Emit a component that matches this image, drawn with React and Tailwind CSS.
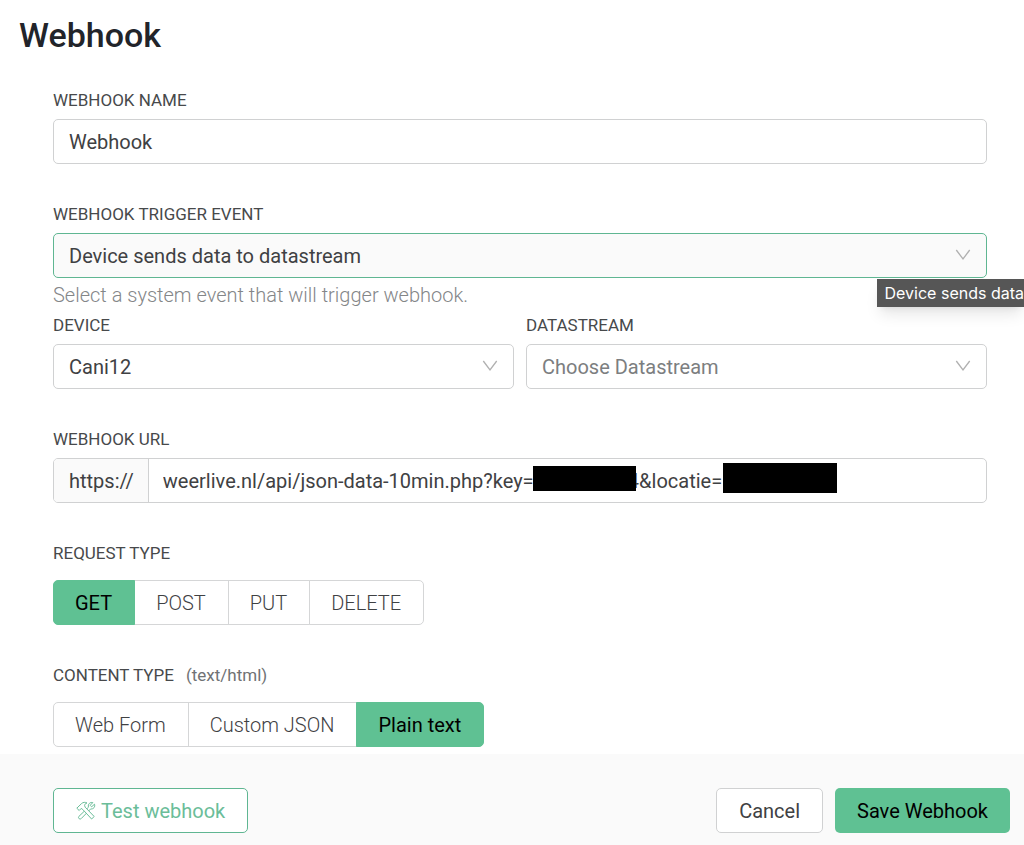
import React, { useState } from 'react';

const REQUEST_TYPES = ['GET', 'POST', 'PUT', 'DELETE'];
const CONTENT_TYPES = ['Web Form', 'Custom JSON', 'Plain text'];

// the key and the location are blanked out in the url
const BLANK_KEY = '\u00a0'.repeat(19) + '4';
const WEBHOOK_URL = `weerlive.nl/api/json-data-10min.php?key=${BLANK_KEY}&locatie=`;

const Label = ({ htmlFor, children }) => (
  <label htmlFor={htmlFor} className="block mb-[7px] text-[17px] leading-6 uppercase text-[#47494b]">
    {children}
  </label>
);

const Chevron = () => (
  <svg
    className="absolute right-4 top-4 w-4 h-3 pointer-events-none"
    viewBox="0 0 16 12"
    fill="none"
    stroke="#b0b0b0"
    strokeWidth="1.3"
  >
    <path d="M1.3 1 L8 10 L14.7 1" />
  </svg>
);

const Select = ({ id, value, active, placeholder }) => (
  <div className="relative">
    <select
      id={id}
      className={`block w-full h-[45px] pl-[15px] pr-10 appearance-none border rounded-[5px] outline-none ${
        active ? 'border-[#5fb692] bg-[#fafafa]' : 'border-[#d0d1d2] bg-white'
      } ${placeholder ? 'text-[#7c7e80]' : 'text-[#3f4143]'}`}
    >
      <option>{value}</option>
    </select>
    <Chevron />
  </div>
);

const RadioButtons = ({ name, legend, hint, options, value, onChange }) => (
  <fieldset>
    <legend className="mb-[15px] text-[17px] leading-6 text-[#47494b]">
      <span className="uppercase">{legend}</span>
      {hint && <span className="ml-3 text-[#707274]">{hint}</span>}
    </legend>
    <div className="flex">
      {options.map((option) => (
        <label
          key={option}
          className={`relative flex items-center h-[45px] pl-[21px] pr-[22px] -ml-px first:ml-0 border first:rounded-l-[5px] last:rounded-r-[5px] cursor-pointer ${
            option === value
              ? 'z-10 bg-[#5fc193] border-[#5fc193] text-black'
              : 'bg-white border-[#d5d6d7] font-light text-[#3f4143]'
          }`}
        >
          <input
            type="radio"
            name={name}
            checked={option === value}
            onChange={() => onChange(option)}
            className="sr-only"
          />
          {option}
        </label>
      ))}
    </div>
  </fieldset>
);

const ToolsIcon = () => (
  <svg
    className="w-5 h-5"
    viewBox="0 0 20 20"
    fill="none"
    stroke="currentColor"
    strokeWidth="1"
    strokeLinejoin="round"
  >
    {/* wrench */}
    <path d="M16.8 1.6 L14.2 4.3 L15.6 5.8 L18.5 3.2 C19.4 5.8 17.5 8.4 14.7 7.9 L5.2 17.6 C3.8 19 1.5 16.8 2.9 15.4 L12.5 6.2 C11.6 3.2 14.1 0.8 16.8 1.6 Z" />
    {/* hammer */}
    <path
      className="fill-white"
      d="M0.8 7.2 L5.6 2.5 C7.2 1.1 9.2 1 11 2 C9.5 2.3 8.7 3.2 8.6 4.6 L9.2 6.2 L18.2 15.5 L15.6 18 L6.8 8.5 L5.2 7.4 L3.2 9.5 Z"
    />
  </svg>
);

const App = () => {
  const [name, setName] = useState('Webhook');
  const [url, setUrl] = useState(WEBHOOK_URL);
  const [requestType, setRequestType] = useState('GET');
  const [contentType, setContentType] = useState('Plain text');

  return (
    <div className="flex flex-col min-h-screen overflow-x-hidden bg-white text-[20px] leading-6 text-[#3f4143] font-['Roboto',sans-serif]">
      <h1 className="pl-[19px] pt-[15px] text-[34px] leading-10 font-medium text-[#22242a]">Webhook</h1>

      <main className="flex-1 pt-[33px] pl-[53px] pr-[37px] pb-1.5">
        <div className="mb-[38px]">
          <Label htmlFor="name">Webhook name</Label>
          <input
            id="name"
            type="text"
            value={name}
            onChange={(e) => setName(e.target.value)}
            className="block w-full h-[45px] px-[15px] border border-[#d0d1d2] rounded-[5px] outline-none"
          />
        </div>

        <div className="relative">
          <Label htmlFor="event">Webhook trigger event</Label>
          <Select id="event" value="Device sends data to datastream" active />
          <p className="h-[35px] leading-[35px] font-light text-[#848688]">
            Select a system event that will trigger webhook.
          </p>
          <div
            role="tooltip"
            className="absolute top-[77px] -right-[37px] h-7 pl-2 bg-[#565656] text-white text-base leading-7 whitespace-nowrap shadow-lg font-['Inter',sans-serif]"
          >
            Device sends data
          </div>
        </div>

        <div className="grid grid-cols-2 gap-3 mb-[38px]">
          <div>
            <Label htmlFor="device">Device</Label>
            <Select id="device" value="Cani12" />
          </div>
          <div>
            <Label htmlFor="datastream">Datastream</Label>
            <Select id="datastream" value="Choose Datastream" placeholder />
          </div>
        </div>

        <div className="mb-[38px]">
          <Label htmlFor="url">Webhook URL</Label>
          <div className="flex h-[45px] border border-[#d0d1d2] rounded-[5px] overflow-hidden">
            <span className="flex items-center pl-[15px] pr-3.5 bg-[#fafafa] border-r border-[#d0d1d2]">https://</span>
            <div className="relative flex-1">
              <input
                id="url"
                type="text"
                value={url}
                onChange={(e) => setUrl(e.target.value)}
                className="block w-full h-full px-3.5 outline-none"
              />
              <span className="absolute left-96 top-[7px] w-[103px] h-[25px] bg-black" />
              <span className="absolute left-[574px] top-1 w-[114px] h-[30px] bg-black" />
            </div>
          </div>
        </div>

        <div className="mb-[38px]">
          <RadioButtons
            name="requestType"
            legend="Request type"
            options={REQUEST_TYPES}
            value={requestType}
            onChange={setRequestType}
          />
        </div>

        <RadioButtons
          name="contentType"
          legend="Content type"
          hint="(text/html)"
          options={CONTENT_TYPES}
          value={contentType}
          onChange={setContentType}
        />
      </main>

      <footer className="flex items-center gap-3 pt-[34px] pb-3 pl-[53px] pr-3.5 bg-[#fafafa]">
        <button
          type="button"
          className="flex items-center gap-[5px] h-[45px] px-[22px] mr-auto bg-white border border-[#5fb692] rounded-[5px] text-[#6bbd99]"
        >
          <ToolsIcon />
          Test webhook
        </button>
        <button type="button" className="h-[45px] px-[22px] bg-white border border-[#d0d1d2] rounded-[5px]">
          Cancel
        </button>
        <button type="button" className="h-[45px] px-[22px] bg-[#5fc193] rounded-[5px] text-black">
          Save Webhook
        </button>
      </footer>
    </div>
  );
};

export default App;
